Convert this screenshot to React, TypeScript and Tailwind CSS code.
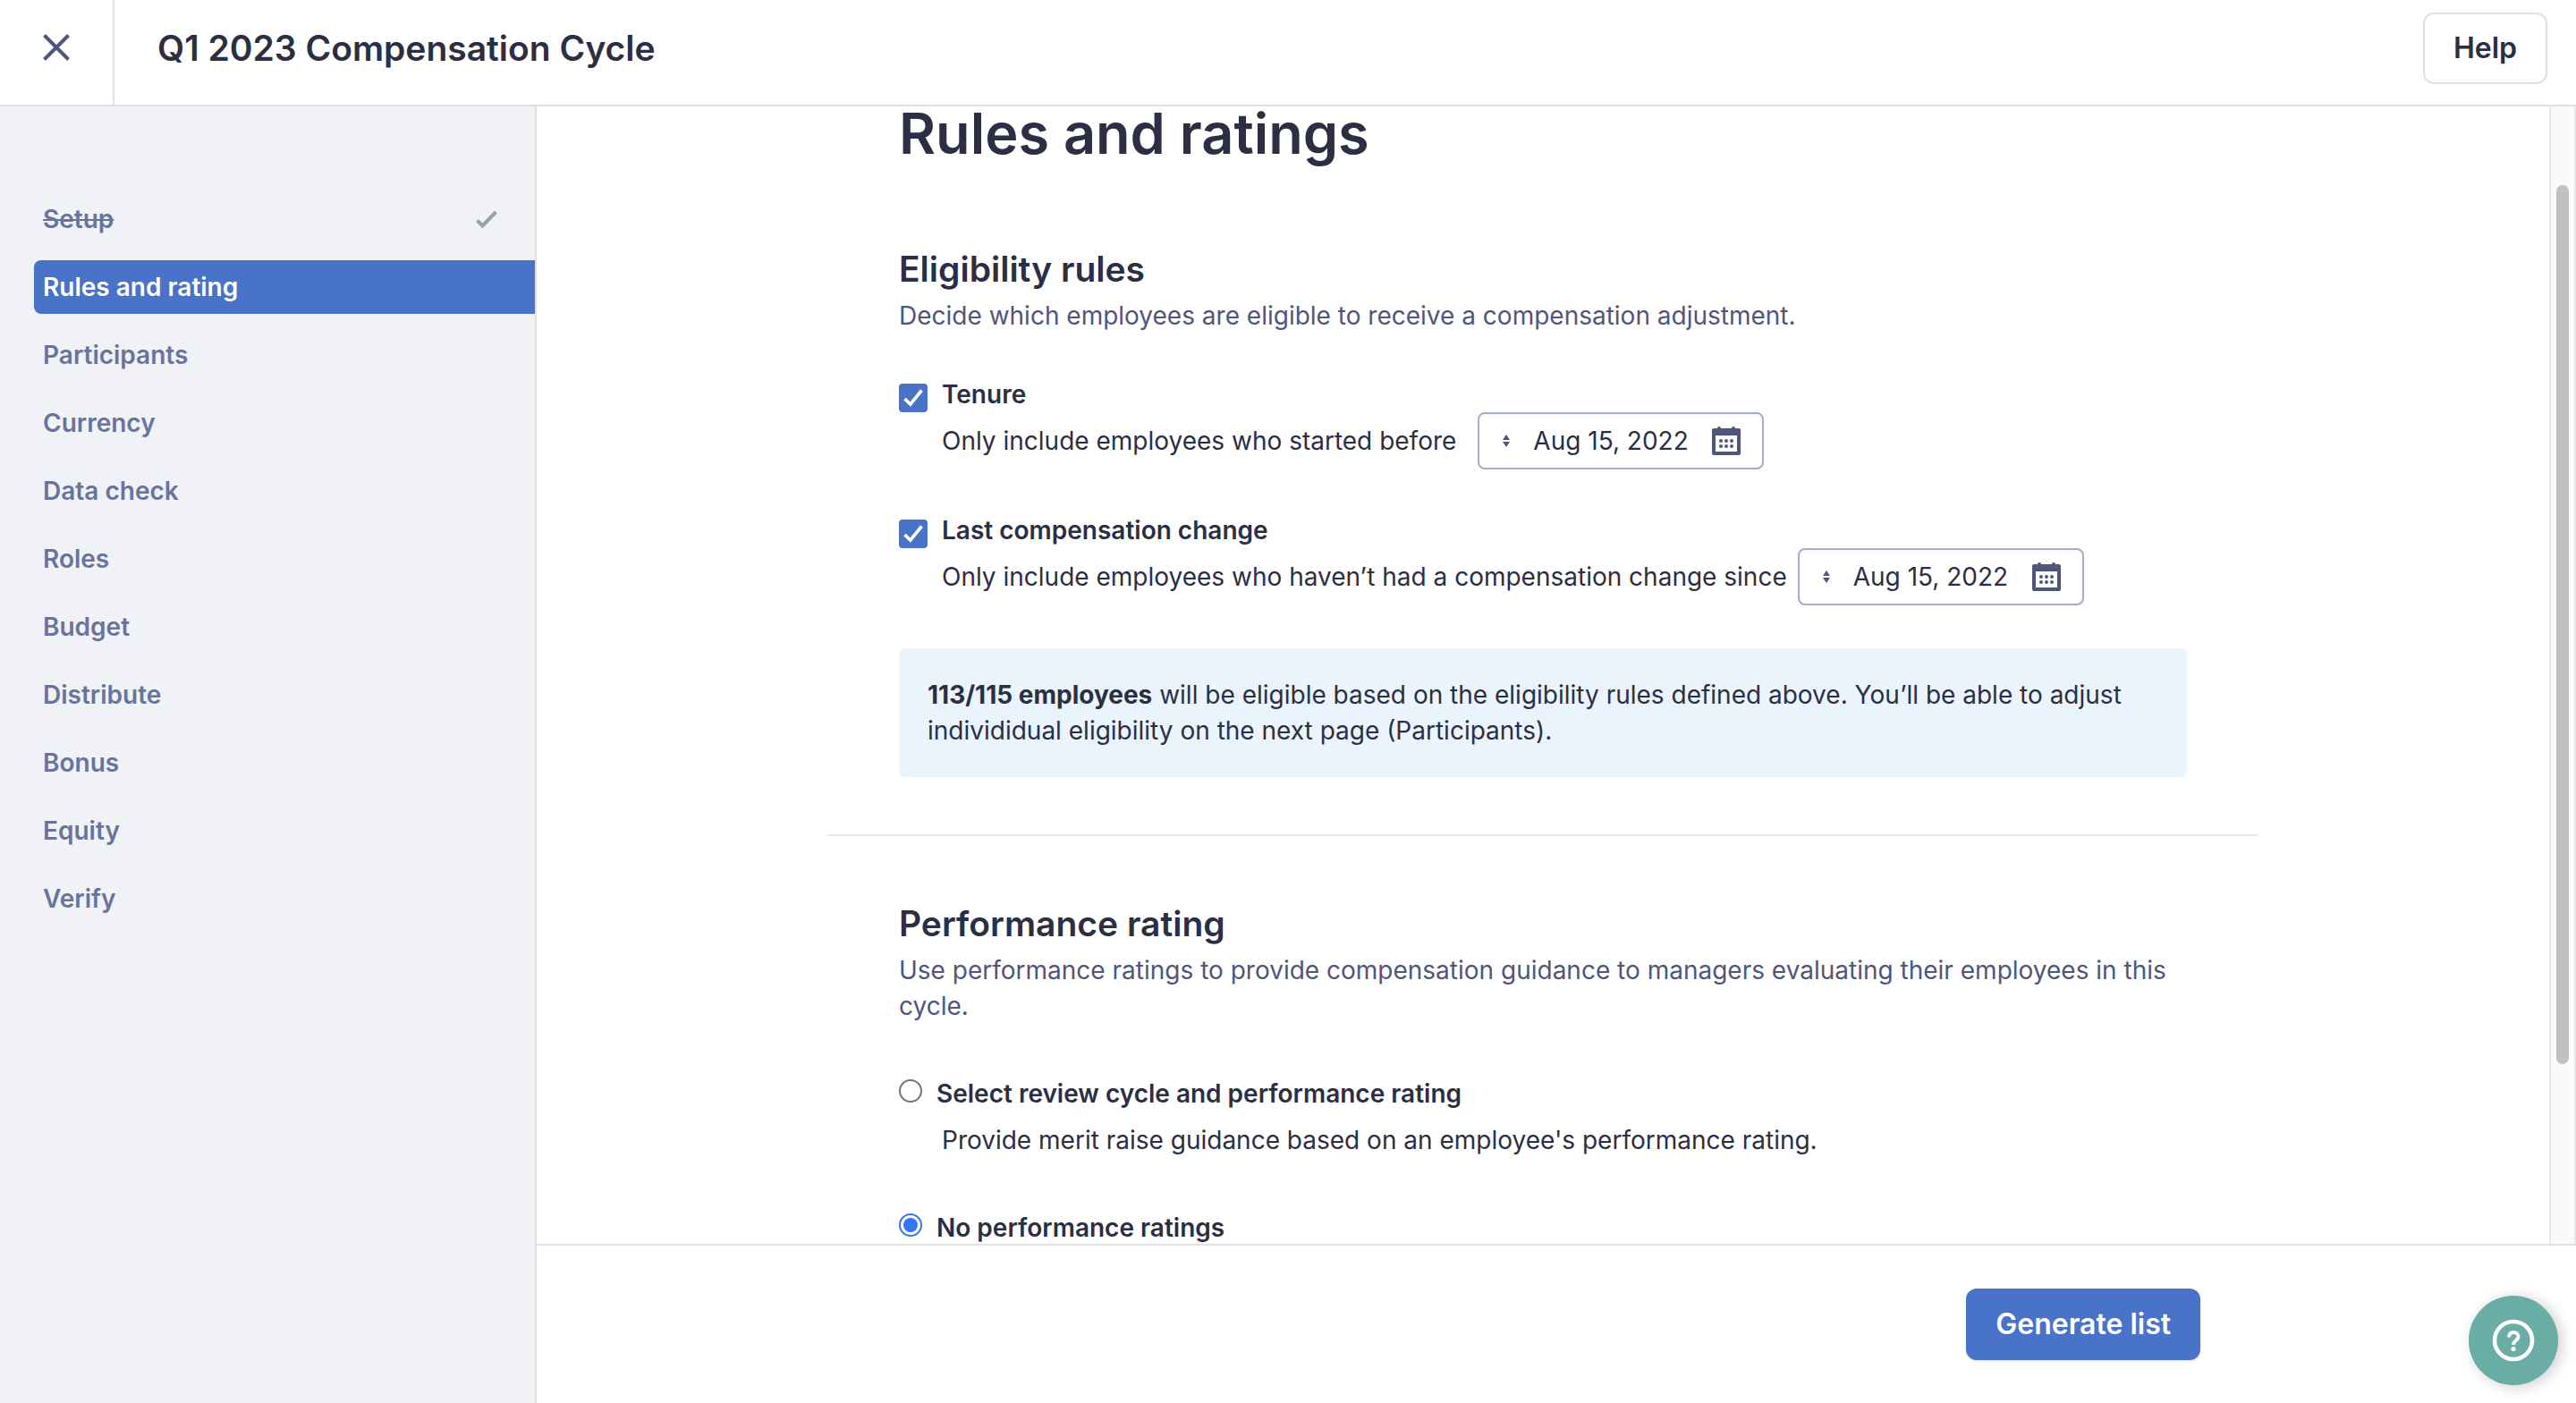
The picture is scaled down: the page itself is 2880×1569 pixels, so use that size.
import { useState } from "react";
import { clsx } from "clsx";

interface Step {
  label: string;
  done?: boolean;
}

const steps: Step[] = [
  { label: "Setup", done: true },
  { label: "Rules and rating" },
  { label: "Participants" },
  { label: "Currency" },
  { label: "Data check" },
  { label: "Roles" },
  { label: "Budget" },
  { label: "Distribute" },
  { label: "Bonus" },
  { label: "Equity" },
  { label: "Verify" },
];

function CloseIcon() {
  return (
    <svg className="size-8" viewBox="0 0 32 32" fill="none" stroke="currentColor" strokeWidth="4">
      <path d="M2.5 2.5l27 27M29.5 2.5l-27 27" />
    </svg>
  );
}

function TickIcon({ className }: { className?: string }) {
  return (
    <svg className={className} viewBox="0 0 24 20" fill="none" stroke="currentColor" strokeWidth="4">
      <path d="M1.5 11.5L7.5 17.5L22.5 2" />
    </svg>
  );
}

function CheckMark() {
  return (
    <svg
      className="pointer-events-none z-10 col-start-1 row-start-1 h-5 w-[22px] text-white"
      viewBox="0 0 22 20"
      fill="none"
      stroke="currentColor"
      strokeWidth="3.6"
    >
      <path d="M1.5 11L7.8 17.2L20.5 1.5" />
    </svg>
  );
}

function CalendarIcon() {
  return (
    <svg className="size-8 shrink-0" viewBox="0 0 32 32" fill="currentColor">
      <path
        fillRule="evenodd"
        d="M6 2a2 2 0 0 1 4 0h12a2 2 0 0 1 4 0h4a2 2 0 0 1 2 2v26a2 2 0 0 1-2 2H2a2 2 0 0 1-2-2V4a2 2 0 0 1 2-2zM4 10v18h24V10z"
      />
      <circle cx="10" cy="16" r="2" />
      <circle cx="16" cy="16" r="2" />
      <circle cx="22" cy="16" r="2" />
      <circle cx="10" cy="22" r="2" />
      <circle cx="16" cy="22" r="2" />
      <circle cx="22" cy="22" r="2" />
    </svg>
  );
}

function SortIcon() {
  return (
    <svg className="h-3.5 w-2 shrink-0" viewBox="0 0 8 14" fill="currentColor">
      <path d="M4 0l4 6H0zM4 14L0 8h8z" />
    </svg>
  );
}

function DateField({ label, className }: { label: string; className?: string }) {
  return (
    <div
      className={clsx(
        "flex h-16 w-80 shrink-0 items-center rounded-lg border-2 border-[#a3aecb] bg-white pr-6 pl-[26px] text-[#50567b] shadow-[inset_0_2px_4px_rgba(0,0,0,0.04)]",
        className
      )}
    >
      <SortIcon />
      <input
        type="text"
        aria-label={label}
        defaultValue="Aug 15, 2022"
        className="ml-[26px] w-0 flex-1 text-[28px] leading-10 text-[#2c2e43] outline-none"
      />
      <CalendarIcon />
    </div>
  );
}

interface RuleProps {
  id: string;
  title: string;
  text: string;
  dateClassName: string;
}

function EligibilityRule({ id, title, text, dateClassName }: RuleProps) {
  const [checked, setChecked] = useState(true);

  return (
    <div className="mt-12 flex items-start gap-4">
      <div className="mt-2 grid size-8 shrink-0 place-items-center">
        <input
          id={id}
          type="checkbox"
          checked={checked}
          onChange={() => setChecked(!checked)}
          className="col-start-1 row-start-1 size-8 appearance-none rounded-sm border-2 border-[#4873c8] bg-white checked:bg-[#4873c8]"
        />
        {checked && <CheckMark />}
      </div>
      <div>
        <label htmlFor={id} className="block font-semibold">
          {title}
        </label>
        <div className="flex items-center">
          <span>{text}</span>
          <DateField label={title} className={dateClassName} />
        </div>
      </div>
    </div>
  );
}

interface RatingOptionProps {
  id: string;
  title: string;
  text?: string;
  selected: boolean;
  onSelect: () => void;
}

function RatingOption({ id, title, text, selected, onSelect }: RatingOptionProps) {
  return (
    <div className="mt-[58px]">
      <div className="flex items-start gap-4">
        <input
          id={id}
          type="radio"
          name="rating"
          checked={selected}
          onChange={onSelect}
          className="mt-1 size-[26px] shrink-0 appearance-none rounded-full border-2 border-[#767676] bg-clip-content p-[3px] checked:border-[#3576f6] checked:bg-[#3576f6]"
        />
        <label htmlFor={id} className="font-semibold">
          {title}
        </label>
      </div>
      {text && <p className="mt-3 pl-12">{text}</p>}
    </div>
  );
}

export default function App() {
  const [current, setCurrent] = useState("Rules and rating");
  const [rating, setRating] = useState("none");

  return (
    <div className="flex h-screen flex-col overflow-hidden bg-white font-[Inter,sans-serif] text-[28px] leading-10 text-[#2c2e43]">
      <header className="flex h-[119px] shrink-0 border-b-2 border-[#dde1e7]">
        <div className="flex w-32 shrink-0 justify-center border-r-2 border-[#dde1e7] pt-[37px]">
          <button aria-label="Close" className="size-8 text-[#50567b]">
            <CloseIcon />
          </button>
        </div>
        <div className="flex flex-1 items-start justify-between pt-3.5 pr-8 pl-12">
          <h2 className="text-[39px] leading-20 font-semibold">Q1 2023 Compensation Cycle</h2>
          <button className="h-20 rounded-xl border-2 border-[#dde1e7] px-8 text-[32px] font-semibold">Help</button>
        </div>
      </header>

      <div className="flex min-h-0 flex-1">
        <nav className="flex w-[600px] shrink-0 flex-col gap-4 border-r-2 border-[#dde1e7] bg-[#f0f2f6] pt-24 pl-[38px]">
          {steps.map((step) => (
            <a
              key={step.label}
              href="#"
              onClick={() => setCurrent(step.label)}
              className={clsx(
                "flex h-[60px] items-center justify-between rounded-l-lg pr-[42px] pl-2.5 font-semibold",
                step.label === current ? "bg-[#4873c8] text-white" : "text-[#68749e]"
              )}
            >
              <span className={step.done ? "line-through" : ""}>{step.label}</span>
              {step.done && <TickIcon className="h-5 w-6 text-[#97a1af]" />}
            </a>
          ))}
        </nav>

        <div className="flex min-w-0 flex-1 flex-col">
          <div className="flex min-h-0 flex-1">
            <main className="flex-1 overflow-hidden">
              <div className="mx-auto max-w-[1600px]">
                <section className="px-20">
                  <h1 className="text-[63px] leading-15 font-semibold">Rules and ratings</h1>
                  <h2 className="mt-24 text-[39px] leading-13 font-semibold">Eligibility rules</h2>
                  <p className="mt-1.5 text-[#50567b]">
                    Decide which employees are eligible to receive a compensation adjustment.
                  </p>
                  <EligibilityRule
                    id="tenure"
                    title="Tenure"
                    text="Only include employees who started before"
                    dateClassName="ml-6"
                  />
                  <EligibilityRule
                    id="last-change"
                    title="Last compensation change"
                    text="Only include employees who haven’t had a compensation change since"
                    dateClassName="ml-3"
                  />
                  <p className="mt-12 rounded-lg bg-[#e9f4fd] p-8">
                    <strong className="font-bold">113/115 employees</strong> will be eligible based on the eligibility
                    rules defined above. You’ll be able to adjust individidual eligibility on the next page
                    (Participants).
                  </p>
                </section>

                <hr className="mt-16 border-t-2 border-[#ebebeb]" />

                <section className="px-20 pt-18">
                  <h2 className="text-[39px] leading-13 font-semibold">Performance rating</h2>
                  <p className="mt-1.5 text-[#50567b]">
                    Use performance ratings to provide compensation guidance to managers evaluating their employees in
                    this cycle.
                  </p>
                  <RatingOption
                    id="rating-review"
                    title="Select review cycle and performance rating"
                    text="Provide merit raise guidance based on an employee's performance rating."
                    selected={rating === "review"}
                    onSelect={() => setRating("review")}
                  />
                  <RatingOption
                    id="rating-none"
                    title="No performance ratings"
                    selected={rating === "none"}
                    onSelect={() => setRating("none")}
                  />
                </section>
              </div>
            </main>

            {/* scroll track */}
            <div className="w-[30px] shrink-0 border-x-2 border-[#e8e8e8] bg-[#fafafa] px-1.5 pt-[88px]">
              <div className="h-[83%] w-full rounded-full bg-[#c1c1c1]" />
            </div>
          </div>

          <footer className="h-[178px] shrink-0 border-t-2 border-[#dde1e7] pt-12">
            <div className="mx-auto flex max-w-[1440px] justify-end">
              <button className="h-20 rounded-xl bg-[#4873c8] px-[33px] text-[32px] font-semibold text-white shadow-sm">
                Generate list
              </button>
            </div>
          </footer>
        </div>
      </div>

      <button
        aria-label="Support"
        className="fixed right-5 bottom-5 flex size-25 items-center justify-center rounded-full bg-[#6aada4] text-white shadow-[4px_2px_16px_rgba(0,0,0,0.2)]"
      >
        <svg className="size-12" viewBox="0 0 48 48" fill="none" stroke="currentColor">
          <circle cx="24" cy="24" r="21" strokeWidth="4.6" />
          <path d="M19 20.5c0-3.5 2-5.5 5-5.5s5.500 2 5.500 4.800c0 4-5.500 4.700-5.500 9.200" strokeWidth="4" />
          <circle cx="24" cy="33.5" r="2.6" fill="currentColor" stroke="none" />
        </svg>
      </button>
    </div>
  );
}
